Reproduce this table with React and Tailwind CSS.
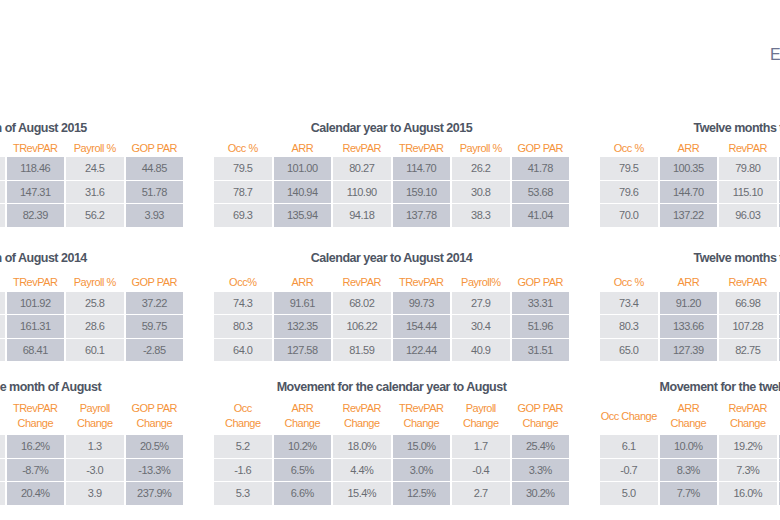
import React from 'react';

// ---------------------------------------------------------------------------
// Data
// ---------------------------------------------------------------------------
const HEAD = ['Occ %', 'ARR', 'RevPAR', 'TRevPAR', 'Payroll %', 'GOP PAR'];
const HEAD_B = ['Occ%', 'ARR', 'RevPAR', 'TRevPAR', 'Payroll%', 'GOP PAR'];
const HEAD_CHG = [
  ['Occ', 'Change'],
  ['ARR', 'Change'],
  ['RevPAR', 'Change'],
  ['TRevPAR', 'Change'],
  ['Payroll', 'Change'],
  ['GOP PAR', 'Change'],
];

const sections = [
  {
    titleGap: 'mt-[5px]',
    rowGap: 'mt-[1px]',
    groups: [
      {
        title: 'For the month of August 2015',
        head: HEAD,
        rows: [
          ['81.2', '108.24', '87.89', '118.46', '24.5', '44.85'],
          ['80.6', '146.02', '117.69', '147.31', '31.6', '51.78'],
          ['68.9', '131.88', '90.87', '82.39', '56.2', '3.93'],
        ],
      },
      {
        title: 'Calendar year to August 2015',
        head: HEAD,
        rows: [
          ['79.5', '101.00', '80.27', '114.70', '26.2', '41.78'],
          ['78.7', '140.94', '110.90', '159.10', '30.8', '53.68'],
          ['69.3', '135.94', '94.18', '137.78', '38.3', '41.04'],
        ],
      },
      {
        title: 'Twelve months to August 2015',
        head: HEAD,
        rows: [
          ['79.5', '100.35', '79.80', '113.22', '26.8', '39.54'],
          ['79.6', '144.70', '115.10', '163.47', '30.1', '56.02'],
          ['70.0', '137.22', '96.03', '140.11', '37.9', '42.18'],
        ],
      },
    ],
  },
  {
    titleGap: 'mt-[9px]',
    rowGap: 'mt-[2px]',
    groups: [
      {
        title: 'For the month of August 2014',
        head: HEAD,
        rows: [
          ['76.8', '99.12', '76.12', '101.92', '25.8', '37.22'],
          ['82.1', '138.40', '113.63', '161.31', '28.6', '59.75'],
          ['62.4', '121.70', '75.94', '68.41', '60.1', '-2.85'],
        ],
      },
      {
        title: 'Calendar year to August 2014',
        head: HEAD_B,
        rows: [
          ['74.3', '91.61', '68.02', '99.73', '27.9', '33.31'],
          ['80.3', '132.35', '106.22', '154.44', '30.4', '51.96'],
          ['64.0', '127.58', '81.59', '122.44', '40.9', '31.51'],
        ],
      },
      {
        title: 'Twelve months to August 2014',
        head: HEAD,
        rows: [
          ['73.4', '91.20', '66.98', '98.10', '28.2', '31.87'],
          ['80.3', '133.66', '107.28', '156.02', '30.2', '52.40'],
          ['65.0', '127.39', '82.75', '124.90', '40.1', '30.66'],
        ],
      },
    ],
  },
  {
    titleGap: 'mt-[6px]',
    rowGap: 'mt-[4px]',
    groups: [
      {
        title: 'Movement for the month of August',
        head: HEAD_CHG,
        rows: [
          ['4.4', '9.2%', '15.5%', '16.2%', '1.3', '20.5%'],
          ['-1.5', '5.5%', '3.6%', '-8.7%', '-3.0', '-13.3%'],
          ['6.5', '8.4%', '19.7%', '20.4%', '3.9', '237.9%'],
        ],
      },
      {
        title: 'Movement for the calendar year to August',
        head: HEAD_CHG,
        rows: [
          ['5.2', '10.2%', '18.0%', '15.0%', '1.7', '25.4%'],
          ['-1.6', '6.5%', '4.4%', '3.0%', '-0.4', '3.3%'],
          ['5.3', '6.6%', '15.4%', '12.5%', '2.7', '30.2%'],
        ],
      },
      {
        title: 'Movement for the twelve months to August',
        head: [['Occ Change'], ...HEAD_CHG.slice(1)],
        rows: [
          ['6.1', '10.0%', '19.2%', '15.4%', '1.4', '24.1%'],
          ['-0.7', '8.3%', '7.3%', '4.8%', '-0.1', '6.9%'],
          ['5.0', '7.7%', '16.0%', '12.2%', '2.2', '37.6%'],
        ],
      },
    ],
  },
];

// ---------------------------------------------------------------------------
// Pieces
// ---------------------------------------------------------------------------
function Group({ g, titleGap, rowGap }) {
  return (
    <div className="w-[355px] shrink-0">
      <div className="text-center text-[12.5px] leading-[16px] font-bold tracking-[-0.5px] text-[#4e5563] whitespace-nowrap">
        {g.title}
      </div>
      <div className={`grid grid-cols-6 gap-x-[2px] ${titleGap}`}>
        {g.head.map((h, i) => (
          <div
            key={i}
            className="flex flex-col items-center justify-center text-[11px] leading-[15px] tracking-[-0.5px] text-[#f5943c] whitespace-nowrap"
          >
            {Array.isArray(h) ? h.map((l) => <span key={l}>{l}</span>) : h}
          </div>
        ))}
      </div>
      <div className={`grid grid-cols-6 gap-x-[2px] gap-y-[1px] ${rowGap}`}>
        {g.rows.flatMap((r, ri) =>
          r.map((v, ci) => (
            <div
              key={`${ri}-${ci}`}
              className={`h-[22.5px] flex items-center justify-center text-[11px] tracking-[-0.5px] text-[#6a6d73] ${
                ci % 2 ? 'bg-[#c8cbd5]' : 'bg-[#e5e6e9]'
              }`}
            >
              {v}
            </div>
          ))
        )}
      </div>
    </div>
  );
}

export default function App() {
  return (
    <div className="w-[780px] h-[520px] overflow-hidden bg-white font-['Liberation_Sans',Arial,sans-serif]">
      {/* report heading, cut at the right edge */}
      <div className="h-[120px] pt-[45px] pl-[770px] whitespace-nowrap text-[16px] leading-[20px] text-[#6c7390]">
        Europe Hotel Benchmark
      </div>

      <div className="ml-[-172px] w-[1127px] flex flex-col">
        {sections.map((s, si) => (
          <div
            key={si}
            className={`flex gap-x-[31px] ${si === 1 ? 'mt-[23px]' : si === 2 ? 'mt-[18px]' : ''}`}
          >
            {s.groups.map((g, gi) => (
              <Group key={gi} g={g} titleGap={s.titleGap} rowGap={s.rowGap} />
            ))}
          </div>
        ))}
      </div>
    </div>
  );
}
